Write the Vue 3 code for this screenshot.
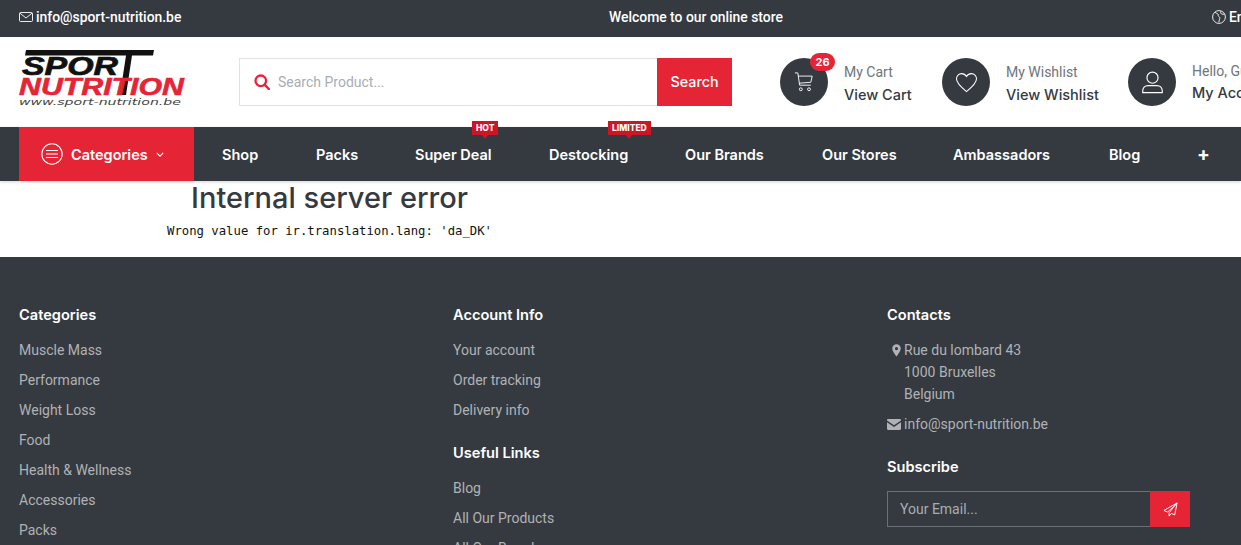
<script setup>
const navItems = [
  { label: 'Shop', width: 94 },
  { label: 'Packs', width: 99 },
  { label: 'Super Deal', width: 134, tag: 'HOT' },
  { label: 'Destocking', width: 136, tag: 'LIMITED' },
  { label: 'Our Brands', width: 137 },
  { label: 'Our Stores', width: 131 },
  { label: 'Ambassadors', width: 156 },
  { label: 'Blog', width: 88 },
]
const categories = ['Muscle Mass', 'Performance', 'Weight Loss', 'Food', 'Health & Wellness', 'Accessories', 'Packs']
const account = ['Your account', 'Order tracking', 'Delivery info']
const useful = ['Blog', 'All Our Products', 'All Our Brands']
</script>

<template>
  <div class="page">
    <div class="topbar">
      <div class="top-left">
        <svg class="mail" viewBox="0 0 14 10" width="14" height="10"><rect x=".5" y=".5" width="13" height="9" rx="1" fill="none" stroke="#fff" stroke-width=".9"/><path d="M1 1.200 7 6l6-4.800" fill="none" stroke="#fff" stroke-width=".9"/></svg>
        <span>info@sport-nutrition.be</span>
      </div>
      <div class="top-center">Welcome to our online store</div>
      <div class="top-right">
        <svg viewBox="0 0 14 14" width="14" height="14"><circle cx="7" cy="7" r="6.400" fill="none" stroke="#fff" stroke-width=".9"/><path d="M3.200 2c.6 1.400 2 1.300 2.800 2 .7.800-.2 1.600.6 2.400.8.600 1.500 1 1.200 2-.2.900-.7 1.700-.9 3.900M9 1.200c-.6 1-.4 2 .3 2.600.8.600 2.200.5 3.300.4" fill="none" stroke="#fff" stroke-width=".9"/></svg>
        <span>English</span>
      </div>
    </div>

    <header class="header">
      <div class="logo">
        <svg viewBox="0 0 166 66" width="166" height="66">
          <path d="M7 0h128l-1 5.500h-21l-6 39.500h-6l6-39.500H6z" fill="#111"/>
          <text x="3" y="25" class="logo-sport" textLength="96" lengthAdjust="spacingAndGlyphs">SPOR</text>
          <text x="0" y="45" class="logo-nutri" textLength="165" lengthAdjust="spacingAndGlyphs">NUTRITION</text>
          <text x="0" y="55" class="logo-url" textLength="162" lengthAdjust="spacingAndGlyphs">www.sport-nutrition.be</text>
        </svg>
      </div>
      <div class="search">
        <svg class="search-icon" viewBox="0 0 16 16" width="16" height="16"><circle cx="6.800" cy="6.800" r="5.300" fill="none" stroke="#e52535" stroke-width="2.300"/><path d="m10.800 10.800 4 4.200" stroke="#e52535" stroke-width="2.500" stroke-linecap="round"/></svg>
        <span class="search-text">Search Product...</span>
        <div class="search-btn">Search</div>
      </div>
      <div class="actions">
        <div class="action cart">
          <div class="circle">
            <svg viewBox="0 0 22 24" width="20" height="22"><path d="M1 2h3.200l2 13.500h12.300M4.700 5.500H20l-1.500 6.800-12.800 1" fill="none" stroke="#fff" stroke-width="1"/><circle cx="7.500" cy="20" r="1.600" fill="none" stroke="#fff"/><circle cx="16.500" cy="20" r="1.600" fill="none" stroke="#fff"/></svg>
            <span class="badge">26</span>
          </div>
          <div class="action-text"><span class="small">My Cart</span><span class="strong">View Cart</span></div>
        </div>
        <div class="action wish">
          <div class="circle">
            <svg viewBox="0 0 24 22" width="23" height="21"><path d="M12 20.500C5 15 1.500 11.500 1.500 7.200 1.500 4 4 1.700 6.800 1.700c2.200 0 4 1 5.200 3 1.200-2 3-3 5.200-3 2.800 0 5.300 2.300 5.300 5.500 0 4.300-3.500 7.800-10.500 13.300z" fill="none" stroke="#fff" stroke-width="1.100"/></svg>
          </div>
          <div class="action-text"><span class="small">My Wishlist</span><span class="strong">View Wishlist</span></div>
        </div>
        <div class="action acct">
          <div class="circle">
            <svg viewBox="0 0 24 24" width="23" height="23"><circle cx="12" cy="7" r="5.800" fill="none" stroke="#fff" stroke-width="1.200"/><path d="M1.800 22.500v-1.700c0-3.500 2.500-5.500 5.500-5.500h9.400c3 0 5.500 2 5.500 5.500v1.700z" fill="none" stroke="#fff" stroke-width="1.200"/></svg>
          </div>
          <div class="action-text tight"><span class="small">Hello, Guest</span><span class="strong">My Account</span></div>
        </div>
      </div>
    </header>

    <nav class="nav">
      <div class="cat-btn">
        <svg viewBox="0 0 22 22" width="22" height="22"><circle cx="11" cy="11" r="10.200" fill="none" stroke="#fff" stroke-width="1.100"/><path d="M5 7.500h12M5 11h12M5 14.500h12" stroke="#fff" stroke-width="1.100"/></svg>
        <span>Categories</span>
        <svg viewBox="0 0 10 6" width="8" height="5"><path d="m1 1 4 4 4-4" fill="none" stroke="#fff" stroke-width="1.400"/></svg>
      </div>
      <div class="nav-items">
        <div v-for="item in navItems" :key="item.label" class="nav-item" :style="{ width: item.width + 'px' }">
          {{ item.label }}
          <span v-if="item.tag" class="tag">{{ item.tag }}</span>
        </div>
        <div class="plus">+</div>
      </div>
    </nav>

    <main class="main">
      <div class="error">
        <h1>Internal server error</h1>
        <pre>Wrong value for ir.translation.lang: 'da_DK'</pre>
      </div>
    </main>

    <footer class="footer">
      <div class="col">
        <h4>Categories</h4>
        <a v-for="c in categories" :key="c">{{ c }}</a>
      </div>
      <div class="col">
        <h4>Account Info</h4>
        <a v-for="c in account" :key="c">{{ c }}</a>
        <h4 class="second">Useful Links</h4>
        <a v-for="c in useful" :key="c">{{ c }}</a>
      </div>
      <div class="col">
        <h4>Contacts</h4>
        <div class="addr">
          <svg viewBox="0 0 10 14" width="9" height="13"><path fill-rule="evenodd" d="M5 0a4.700 4.700 0 0 1 4.700 4.700C9.700 7.500 6.500 11.500 5 13.800 3.500 11.500.3 7.500.3 4.700A4.700 4.700 0 0 1 5 0zm0 3a1.800 1.800 0 1 0 0 3.600A1.800 1.800 0 0 0 5 3z" fill="#b0b2b5"/></svg>
          <div>Rue du lombard 43<br>1000 Bruxelles<br>Belgium</div>
        </div>
        <div class="email">
          <svg viewBox="0 0 14 11" width="14" height="11"><path d="M0 1.200C0 .5.500 0 1.200 0h11.600c.7 0 1.200.5 1.200 1.200v.4L7 6.300 0 1.600zM0 3.200l7 4.700 7-4.700v6.600c0 .7-.5 1.200-1.200 1.200H1.200C.5 11 0 10.500 0 9.800z" fill="#b0b2b5"/></svg>
          <span>info@sport-nutrition.be</span>
        </div>
        <h4 class="sub">Subscribe</h4>
        <div class="subscribe">
          <div class="sub-input">Your Email...</div>
          <div class="sub-btn">
            <svg viewBox="0 0 16 16" width="15" height="15"><path d="M15 1 1 9l4 1.700L15 1 6.500 11.500v3.500l2.300-2.800 3.700 1.600z" fill="none" stroke="#fff" stroke-width="1" stroke-linejoin="round"/></svg>
          </div>
        </div>
      </div>
    </footer>
  </div>
</template>

<style>
html, body { margin: 0; overflow: hidden; background: #fff; }
</style>

<style scoped>
.page { width: 1241px; height: 545px; overflow: hidden; font-family: Roboto, sans-serif; color: #343a40; }
.topbar { height: 37px; background: #353a40; color: #fff; font-size: 13.900px; font-weight: 500; display: grid; grid-template-columns: 609px 603px 29px; align-items: center; white-space: nowrap; padding-bottom: 3px; box-sizing: border-box; }
.top-left { padding-left: 19px; display: flex; align-items: center; gap: 3px; }
.top-right { display: flex; align-items: center; gap: 3px; overflow: hidden; }
.top-right svg { flex: none; }
.header { height: 90px; display: flex; align-items: center; padding-left: 19px; box-sizing: border-box; background: #fff; }
.logo { width: 166px; height: 66px; flex: none; margin-right: 54px; margin-top: 2px; }
.logo svg { display: block; }
.logo-sport { font: italic 700 26px "Liberation Sans", sans-serif; fill: #111; stroke: #111; stroke-width: .7px; }
.logo-nutri { font: italic 700 24px "Liberation Sans", sans-serif; fill: #e52535; stroke: #e52535; stroke-width: .6px; }
.logo-url { font: oblique 400 9.500px "DejaVu Sans", sans-serif; fill: #444; }
.search { width: 493px; height: 48px; box-sizing: border-box; border: 1px solid #e2e2e2; border-right: 0; display: flex; align-items: center; flex: none; margin-right: 48px; }
.search-icon { margin-left: 14px; margin-right: 8px; }
.search-text { flex: 1; color: #a9adb3; font-size: 14px; }
.search-btn { width: 75px; height: 48px; margin: -1px 0; padding-bottom: 2px; box-sizing: border-box; background: #e52535; color: #fff; font: 500 14.300px Inter, sans-serif; display: flex; align-items: center; justify-content: center; }
.actions { display: flex; flex: none; }
.action { display: flex; align-items: center; gap: 16px; white-space: nowrap; }
.cart { width: 162px; }
.wish { width: 186px; }
.circle { position: relative; width: 48px; height: 48px; border-radius: 50%; background: #353a40; display: flex; align-items: center; justify-content: center; flex: none; }
.badge { position: absolute; top: -5px; right: -7px; width: 25px; height: 18px; border-radius: 9px; background: #e52535; color: #fff; font: 700 11px Inter, sans-serif; display: flex; align-items: center; justify-content: center; }
.action-text { display: flex; flex-direction: column; gap: 5px; padding-top: 2px; }
.action-text.tight { gap: 4px; padding-top: 0; }
.small { font-size: 14px; line-height: 18px; color: #6f747b; }
.strong { font: 500 14.500px/18px Inter, sans-serif; color: #343a40; }
.nav { height: 54px; background: #353a40; padding-left: 19px; display: flex; box-shadow: 0 1px 3px rgba(0,0,0,.18); position: relative; }
.cat-btn { width: 175px; background: #e52535; color: #fff; font: 600 14.500px Inter, sans-serif; display: flex; align-items: center; box-sizing: border-box; padding-left: 22px; }
.cat-btn span { margin: 0 8px; }
.nav-items { display: flex; align-items: center; padding-left: 28px; color: #fff; font: 600 14.500px Inter, sans-serif; white-space: nowrap; }
.nav-item { position: relative; flex: none; }
.tag { position: absolute; top: -25px; background: #cc1525; color: #fff; font: 800 8.500px/14px Inter, sans-serif; padding: 0 4px; }
.nav-item:nth-child(3) .tag { left: 57px; }
.nav-item:nth-child(4) .tag { left: 59px; }
.tag::after { content: ""; position: absolute; left: 50%; bottom: -4px; margin-left: -3px; border: 3px solid transparent; border-bottom: 0; border-top: 4px solid #cc1525; }
.plus { font-size: 19px; font-weight: 700; }
.main { height: 76px; box-sizing: border-box; background: #fff; }
.error { width: 621px; margin-left: 19px; text-align: center; }
h1 { margin: 0; font: 500 29px/34px Inter, sans-serif; color: #353a40; }
pre { margin: 7px 0 0; font: 12.270px/18px "DejaVu Sans Mono", monospace; color: #111; }
.footer { height: 288px; background: #353a40; display: grid; grid-template-columns: 434px 434px 1fr; padding: 48px 0 0 19px; box-sizing: border-box; color: #b0b2b5; font-size: 14px; overflow: hidden; align-items: start; }
.col { display: flex; flex-direction: column; }
h4 { margin: 0 0 10px; font: 600 14.600px/20px Inter, sans-serif; color: #fff; }
.col a { line-height: 30px; }
.col h4.second { margin-top: 18px; }
.addr { display: flex; line-height: 22px; padding-left: 5px; gap: 3px; margin-top: 4px; }
.addr svg { margin-top: 5px; flex: none; }
.email { display: flex; align-items: center; gap: 3px; line-height: 22px; margin-top: 8px; }
.col h4.sub { margin: 22px 0 14px; }
.subscribe { width: 303px; height: 36px; display: flex; }
.sub-input { flex: 1; border: 1px solid #6b7076; border-right: 0; box-sizing: border-box; padding-left: 12px; line-height: 34px; color: #a9adb3; }
.sub-btn { width: 40px; background: #e52535; display: flex; align-items: center; justify-content: center; }
</style>
